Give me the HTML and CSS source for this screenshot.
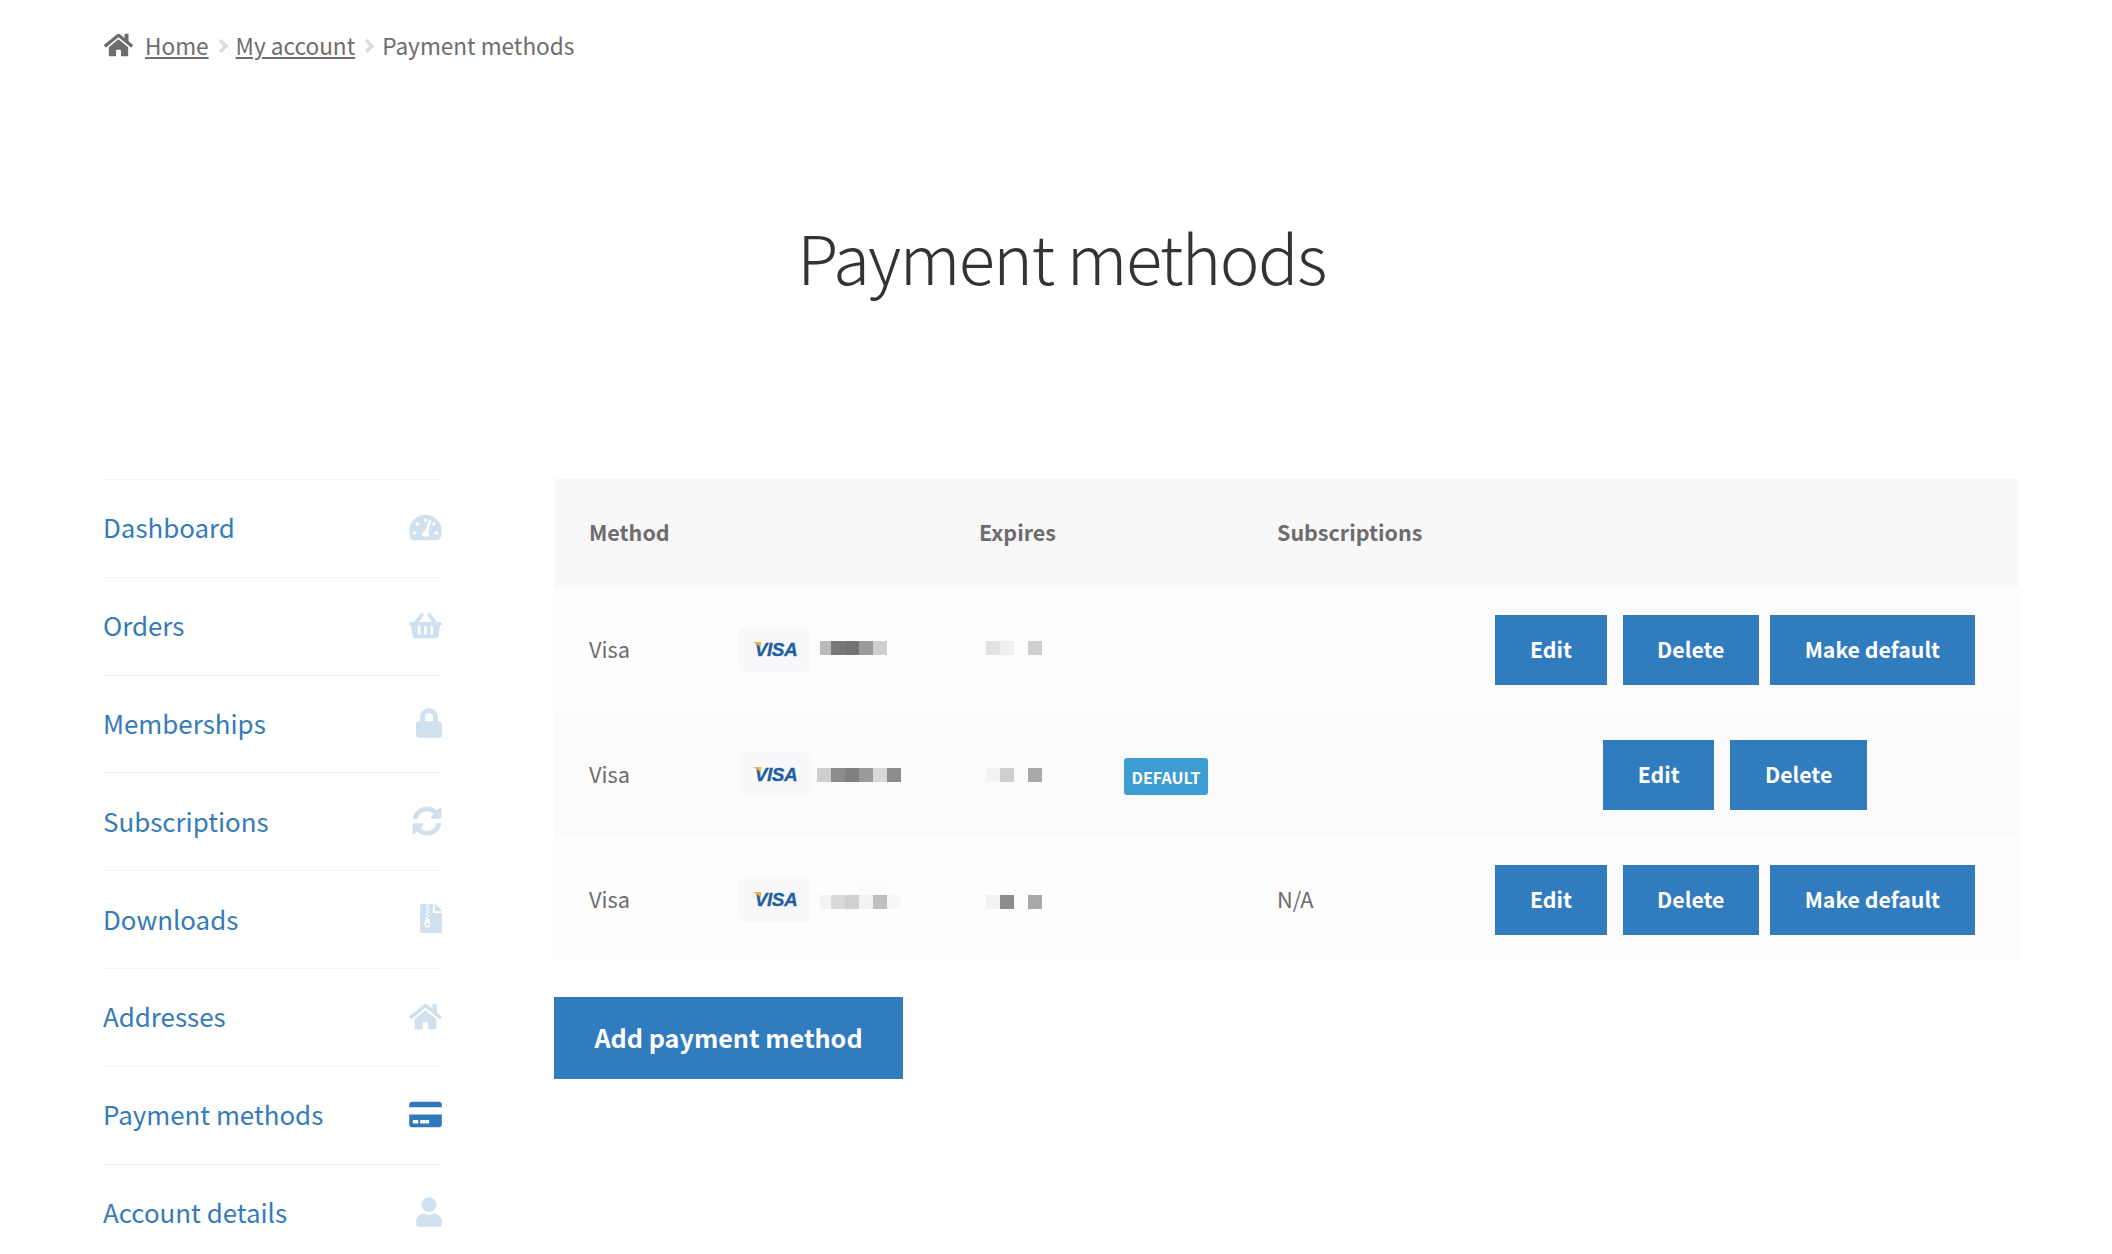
FILE: index.html
```html
<!DOCTYPE html>
<html lang="en">
<head>
<meta charset="utf-8">
<title>Payment methods</title>
<link rel="stylesheet" href="styles.css">
</head>
<body>
<div class="page">
  <nav class="crumbs">
    <svg class="crumb-home" viewBox="0 0 576 512"><path d="M280.37 148.26L96 300.11V464a16 16 0 0 0 16 16l112.06-.29a16 16 0 0 0 15.92-16V368a16 16 0 0 1 16-16h64a16 16 0 0 1 16 16v95.64a16 16 0 0 0 16 16.05L464 480a16 16 0 0 0 16-16V300L295.67 148.26a12.19 12.19 0 0 0-15.3 0zM571.6 251.47L488 182.56V44.05a12 12 0 0 0-12-12h-56a12 12 0 0 0-12 12v72.61L318.47 43a48 48 0 0 0-61 0L4.34 251.47a12 12 0 0 0-1.6 16.9l25.5 31A12 12 0 0 0 45.15 301l235.22-193.74a12.19 12.19 0 0 1 15.3 0L530.9 301a12 12 0 0 0 16.9-1.6l25.5-31a12 12 0 0 0-1.7-16.93z"/></svg>
    <a href="#">Home</a>
    <svg class="crumb-sep" viewBox="0 0 10 14"><path d="M2 1l6 6-6 6" /></svg>
    <a href="#">My account</a>
    <svg class="crumb-sep" viewBox="0 0 10 14"><path d="M2 1l6 6-6 6" /></svg>
    <span>Payment methods</span>
  </nav>

  <h1 class="title">Payment methods</h1>

  <div class="columns">
    <ul class="side">
      <li class="side-row"><a href="#">Dashboard</a><svg class="ico ico-wide" viewBox="0 0 576 512"><path d="M288 32C128.94 32 0 160.94 0 320c0 52.8 14.25 102.26 39.06 144.8 5.61 9.62 16.3 15.2 27.44 15.2h443c11.14 0 21.83-5.58 27.44-15.2C561.75 422.26 576 372.8 576 320c0-159.06-128.94-288-288-288zm0 64c14.71 0 26.58 10.13 30.32 23.65-1.11 2.26-2.64 4.23-3.45 6.67l-9.22 27.67c-5.13 3.49-10.97 6.01-17.64 6.01-17.67 0-32-14.33-32-32S270.33 96 288 96zM96 384c-17.67 0-32-14.33-32-32s14.33-32 32-32 32 14.33 32 32-14.33 32-32 32zm48-160c-17.67 0-32-14.33-32-32s14.33-32 32-32 32 14.33 32 32-14.33 32-32 32zm246.77-72.41l-61.33 184C343.13 347.33 352 364.54 352 384c0 11.72-3.38 22.55-8.88 32H232.88c-5.5-9.45-8.88-20.28-8.88-32 0-33.94 26.5-61.43 59.9-63.59l61.34-184.01c4.17-12.56 17.73-19.45 30.36-15.17 12.57 4.19 19.35 17.79 15.17 30.36zm14.66 57.2l15.52-46.55c3.47-1.29 7.13-2.23 11.05-2.23 17.67 0 32 14.33 32 32s-14.33 32-32 32c-11.38-.01-20.89-6.28-26.57-15.22zM480 384c-17.67 0-32-14.33-32-32s14.33-32 32-32 32 14.33 32 32-14.33 32-32 32z"/></svg></li>
      <li class="side-row"><a href="#">Orders</a><svg class="ico ico-wide" viewBox="0 0 576 512"><path d="M576 216v16c0 13.255-10.745 24-24 24h-8l-26.113 182.788C514.509 462.435 494.257 480 470.37 480H105.63c-23.887 0-44.139-17.565-47.518-41.212L32 256h-8c-13.255 0-24-10.745-24-24v-16c0-13.255 10.745-24 24-24h67.341l106.78-146.821c10.395-14.292 30.407-17.453 44.701-7.058 14.293 10.395 17.453 30.408 7.058 44.701L170.477 192h235.046L326.12 82.821c-10.395-14.292-7.234-34.306 7.059-44.701 14.291-10.395 34.306-7.235 44.701 7.058L484.659 192H552c13.255 0 24 10.745 24 24zM312 392V280c0-13.255-10.745-24-24-24s-24 10.745-24 24v112c0 13.255 10.745 24 24 24s24-10.745 24-24zm112 0V280c0-13.255-10.745-24-24-24s-24 10.745-24 24v112c0 13.255 10.745 24 24 24s24-10.745 24-24zm-224 0V280c0-13.255-10.745-24-24-24s-24 10.745-24 24v112c0 13.255 10.745 24 24 24s24-10.745 24-24z"/></svg></li>
      <li class="side-row"><a href="#">Memberships</a><svg class="ico ico-lock" viewBox="0 0 448 512"><path d="M400 224h-24v-72C376 68.2 307.8 0 224 0S72 68.2 72 152v72H48c-26.5 0-48 21.5-48 48v192c0 26.5 21.5 48 48 48h352c26.5 0 48-21.5 48-48V272c0-26.5-21.5-48-48-48zm-104 0H152v-72c0-39.7 32.3-72 72-72s72 32.3 72 72v72z"/></svg></li>
      <li class="side-row"><a href="#">Subscriptions</a><svg class="ico ico-sq" viewBox="0 0 512 512"><path d="M370.72 133.28C339.458 104.008 298.888 87.962 255.848 88c-77.458.068-144.328 53.178-162.791 126.85-1.344 5.363-6.122 9.15-11.651 9.15H24.103c-7.498 0-13.194-6.807-11.807-14.176C33.933 94.924 134.813 8 256 8c66.448 0 126.791 26.136 171.315 68.685L463.03 40.97C478.149 25.851 504 36.559 504 57.941V192c0 13.255-10.745 24-24 24H345.941c-21.382 0-32.09-25.851-16.971-40.971l41.75-41.749zM32 296h134.059c21.382 0 32.09 25.851 16.971 40.971l-41.75 41.75c31.262 29.273 71.835 45.319 114.876 45.28 77.418-.07 144.315-53.144 162.787-126.849 1.344-5.363 6.122-9.15 11.651-9.15h57.304c7.498 0 13.194 6.807 11.807 14.176C478.067 417.076 377.187 504 256 504c-66.448 0-126.791-26.136-171.315-68.685L48.97 471.03C33.851 486.149 8 475.441 8 454.059V320c0-13.255 10.745-24 24-24z"/></svg></li>
      <li class="side-row"><a href="#">Downloads</a><svg class="ico ico-file" viewBox="0 0 384 512"><path d="M377 105L279.1 7c-4.5-4.5-10.6-7-17-7H256v128h128v-6.1c0-6.3-2.5-12.4-7-16.9zM128.4 336c-17.9 0-32.4 12.1-32.4 27 0 15 14.6 27 32.5 27s32.4-12.1 32.4-27-14.6-27-32.5-27zM224 136V0h-63.6v32h-32V0H24C10.7 0 0 10.7 0 24v464c0 13.3 10.7 24 24 24h336c13.3 0 24-10.7 24-24V160H248c-13.2 0-24-10.8-24-24zM95.9 32h32v32h-32zm32.3 384c-33.2 0-58-30.4-51.4-62.9L96.4 256v-32h32v-32h-32v-32h32v-32h-32V96h32V64h32v32h-32v32h32v32h-32v32h32v32h-32v32h22.1c5.7 0 10.7 4.1 11.8 9.7l17.3 87.7c6.4 32.4-18.4 62.6-51.4 62.6z"/></svg></li>
      <li class="side-row"><a href="#">Addresses</a><svg class="ico ico-wide" viewBox="0 0 576 512"><path d="M280.37 148.26L96 300.11V464a16 16 0 0 0 16 16l112.06-.29a16 16 0 0 0 15.92-16V368a16 16 0 0 1 16-16h64a16 16 0 0 1 16 16v95.64a16 16 0 0 0 16 16.05L464 480a16 16 0 0 0 16-16V300L295.67 148.26a12.19 12.19 0 0 0-15.3 0zM571.6 251.47L488 182.56V44.05a12 12 0 0 0-12-12h-56a12 12 0 0 0-12 12v72.61L318.47 43a48 48 0 0 0-61 0L4.34 251.47a12 12 0 0 0-1.6 16.9l25.5 31A12 12 0 0 0 45.15 301l235.22-193.74a12.19 12.19 0 0 1 15.3 0L530.9 301a12 12 0 0 0 16.9-1.6l25.5-31a12 12 0 0 0-1.7-16.93z"/></svg></li>
      <li class="side-row"><a href="#">Payment methods</a><svg class="ico ico-wide ico-active" viewBox="0 0 576 512"><path d="M0 432c0 26.5 21.5 48 48 48h480c26.5 0 48-21.5 48-48V256H0v176zm192-68c0-6.6 5.4-12 12-12h136c6.6 0 12 5.4 12 12v40c0 6.6-5.4 12-12 12H204c-6.6 0-12-5.4-12-12v-40zm-128 0c0-6.6 5.4-12 12-12h72c6.6 0 12 5.4 12 12v40c0 6.6-5.4 12-12 12H76c-6.6 0-12-5.4-12-12v-40zM576 80v48H0V80c0-26.5 21.5-48 48-48h480c26.5 0 48 21.5 48 48z"/></svg></li>
      <li class="side-row"><a href="#">Account details</a><svg class="ico ico-lock" viewBox="0 0 448 512"><path d="M224 256c70.7 0 128-57.3 128-128S294.7 0 224 0 96 57.3 96 128s57.3 128 128 128zm89.6 32h-16.7c-22.2 10.2-46.9 16-72.9 16s-50.6-5.8-72.9-16h-16.7C60.2 288 0 348.2 0 422.4V464c0 26.5 21.5 48 48 48h352c26.5 0 48-21.5 48-48v-41.6c0-74.2-60.2-134.4-134.4-134.4z"/></svg></li>
    </ul>

    <main class="main">
      <table class="methods">
        <colgroup>
          <col class="col-method"><col class="col-expires"><col class="col-subs"><col class="col-actions">
        </colgroup>
        <thead>
          <tr><th>Method</th><th>Expires</th><th>Subscriptions</th><th></th></tr>
        </thead>
        <tbody>
          <tr>
            <td>
              <div class="method">
                <span class="brand">Visa</span>
                <span class="card"><span class="swoosh"></span><span class="visa">VISA</span></span>
                <span class="pix pix-a pix-up"><i class="p-b"></i><i class="p-g"></i><i class="p-g2"></i><i class="p-m"></i><i class="p-l"></i></span>
              </div>
            </td>
            <td class="cell-exp">
              <div class="expiry">
                <span class="pix pix-up"><i class="p-e"></i><i class="p-f"></i><i class="p-0"></i><i class="p-l"></i></span>
              </div>
            </td>
            <td></td>
            <td class="cell-act"><a class="btn btn-edit" href="#">Edit</a><a class="btn" href="#">Delete</a><a class="btn btn-make" href="#">Make default</a></td>
          </tr>
          <tr>
            <td>
              <div class="method">
                <span class="brand">Visa</span>
                <span class="card"><span class="swoosh"></span><span class="visa">VISA</span></span>
                <span class="pix pix-b"><i class="p-l"></i><i class="p-d"></i><i class="p-g3 p-halo"></i><i class="p-m"></i><i class="p-x"></i><i class="p-d"></i></span>
              </div>
            </td>
            <td class="cell-exp">
              <div class="expiry">
                <span class="pix"><i class="p-f2"></i><i class="p-l"></i><i class="p-0"></i><i class="p-m2"></i></span>
                <span class="badge">Default</span>
              </div>
            </td>
            <td></td>
            <td class="cell-act"><a class="btn btn-edit" href="#">Edit</a><a class="btn" href="#">Delete</a></td>
          </tr>
          <tr>
            <td>
              <div class="method">
                <span class="brand">Visa</span>
                <span class="card"><span class="swoosh"></span><span class="visa">VISA</span></span>
                <span class="pix pix-a pix-down"><i class="p-f2"></i><i class="p-x"></i><i class="p-y"></i><i class="p-f2 p-halo"></i><i class="p-z p-halo"></i><i class="p-f3"></i></span>
              </div>
            </td>
            <td class="cell-exp">
              <div class="expiry">
                <span class="pix pix-down"><i class="p-f2"></i><i class="p-d"></i><i class="p-0"></i><i class="p-m2"></i></span>
              </div>
            </td>
            <td class="cell-na">N/A</td>
            <td class="cell-act"><a class="btn btn-edit" href="#">Edit</a><a class="btn" href="#">Delete</a><a class="btn btn-make" href="#">Make default</a></td>
          </tr>
        </tbody>
      </table>
      <a class="add" href="#">Add payment method</a>
    </main>
  </div>
</div>
</body>
</html>
```

FILE: styles.css
```css
* { box-sizing: border-box; }
html, body { margin: 0; padding: 0; background: #fff; }
body {
  font-family: "Noto Sans CJK SC", "Source Sans Pro", "Noto Sans", sans-serif;
  color: #6d6d6d;
  font-size: 21.8px;
}
.page {
  width: 2112px;
  height: 1254px;
  overflow: hidden;
  padding: 30px 93px 0 104px;
}
a { color: inherit; }

.crumbs {
  display: flex;
  align-items: center;
  height: 32px;
  line-height: 32px;
  font-size: 22.6px;
  color: #6d6d6d;
}
.crumb-home { width: 29px; height: 26px; fill: #6d6d6d; margin-right: 12px; margin-top: -3px; }
.crumb-sep { width: 10px; height: 14px; margin: 0 8px 0 9px; fill: none; stroke: #dcdcdc; stroke-width: 3.4; }

.title {
  margin: 0;
  padding-top: 134px;
  height: 417px;
  text-align: center;
  font-weight: 300;
  font-size: 67px;
  line-height: 120px;
  letter-spacing: -1.5px;
  color: #333;
}

.columns { display: flex; gap: 112px; }

.side { list-style: none; margin: 0; padding: 0; width: 338px; flex: none; }
.side-row {
  height: 97.8px;
  border-top: 1px solid #f2f2f2;
  display: flex;
  align-items: center;
  justify-content: space-between;
  font-size: 25.9px;
}
.side-row a { text-decoration: none; color: #357bb8; margin: -3px 0 0 -1px; }
.ico { fill: #cfe0ee; flex: none; margin-top: -2px; }
.ico-wide { width: 33px; height: 29px; }
.ico-sq { width: 30px; height: 30px; }
.ico-lock { width: 26px; height: 30px; }
.ico-file { width: 22px; height: 29px; }
.ico-active { fill: #2f78bc; }

.main { width: 1465px; flex: none; }
.methods {
  width: 1465px;
  table-layout: fixed;
  border-collapse: collapse;
}
.col-method { width: 390px; }
.col-expires { width: 298px; }
.col-subs { width: 209px; }
.col-actions { width: 568px; }
.methods th {
  height: 108px;
  padding: 0 35px 3px;
  text-align: left;
  font-size: 21.5px;
  font-weight: 600;
  background: #f8f8f8;
}
.methods td { height: 125px; padding: 0 0 0 35px; vertical-align: middle; background: #fdfdfd; }
.methods tbody tr:nth-child(2) td { background: #fbfbfb; }
.methods td.cell-act { padding: 0; text-align: center; }
.methods td.cell-na { padding-bottom: 3px; }

.method { display: flex; align-items: center; }
.brand { width: 150px; flex: none; margin-top: -3px; }
.card {
  position: relative;
  width: 72px;
  height: 45px;
  flex: none;
  display: flex;
  align-items: center;
  justify-content: center;
  padding-left: 2px;
  background: #f8f8fa;
  border-radius: 6px;
}
.visa {
  font-family: "Liberation Sans", sans-serif;
  font-weight: 700;
  font-style: italic;
  font-size: 19px;
  letter-spacing: -0.5px;
  color: #1f5f9f;
  -webkit-text-stroke: 0.3px #1f5f9f;
}
.swoosh {
  position: absolute;
  left: 14px;
  top: 15px;
  width: 0;
  height: 0;
  border-top: 5px solid #eeb24b;
  border-left: 8px solid transparent;
}

.pix { display: flex; flex: none; }
.pix i { display: block; width: 14px; height: 14px; }
.pix-a { margin-left: 9px; }
.pix-a i:first-child { width: 11px; }
.pix-b { margin-left: 6px; }
.pix-up { margin-top: -4px; }
.pix-down { margin-top: 4px; }
.p-halo { box-shadow: 0 -14px 0 #fbfbfb; }
.p-b { background: #bbb; }
.p-g { background: #777; }
.p-g2 { background: #727272; }
.p-m { background: #9a9a9a; }
.p-l { background: #cfcfcf; }
.p-d { background: #8c8c8c; }
.p-g3 { background: #808080; }
.p-x { background: #d9d9d9; }
.p-y { background: #d0d0d0; }
.p-z { background: #c0c0c0; }
.p-e { background: #e2e2e2; }
.p-f { background: #efefef; }
.p-f2 { background: #f3f3f3; }
.p-f3 { background: #f7f7f7; }
.p-m2 { background: #a8a8a8; }
.p-0 { background: transparent; }

.expiry { display: flex; align-items: center; padding-left: 7px; }
.badge {
  margin-left: 82px;
  margin-right: -60px;
  margin-top: 4px;
  width: 84px;
  height: 37px;
  flex: none;
  display: flex;
  align-items: center;
  justify-content: center;
  background: #3d9cd2;
  border-radius: 3px;
  color: #fff;
  font-size: 16px;
  font-weight: 600;
  text-transform: uppercase;
}

.btn {
  display: inline-block;
  height: 70px;
  line-height: 68px;
  padding: 0 34.6px;
  background: #317bbf;
  color: #fff;
  font-size: 21.3px;
  font-weight: 600;
  text-decoration: none;
  vertical-align: middle;
}
.btn-edit { margin-right: 16px; }
.btn-make { margin-left: 11px; }

.add {
  display: inline-block;
  margin-top: 35px;
  width: 349px;
  height: 82px;
  line-height: 80px;
  text-align: center;
  background: #317bbf;
  color: #fff;
  font-size: 25.2px;
  font-weight: 600;
  text-decoration: none;
}
```
